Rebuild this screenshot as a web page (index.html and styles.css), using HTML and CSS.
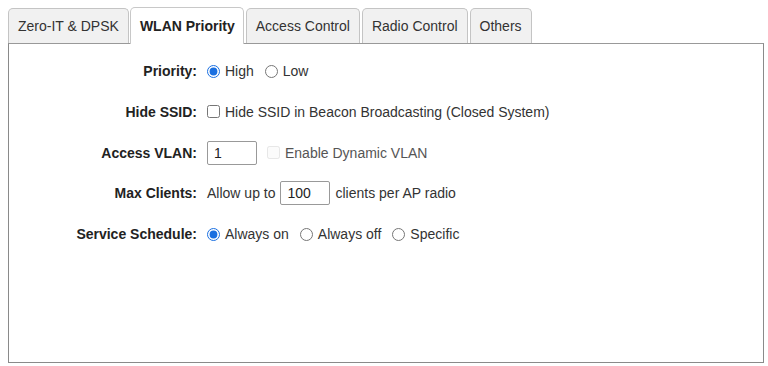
FILE: index.html
```html
<!DOCTYPE html>
<html lang="en">

<head>
    <meta charset="UTF-8">
    <title>WLAN Settings</title>
    <link rel="stylesheet" href="styles.css">
</head>

<body>

    <div class="tabs">
        <div class="tab">Zero-IT &amp; DPSK</div>
        <div class="tab active">WLAN Priority</div>
        <div class="tab">Access Control</div>
        <div class="tab">Radio Control</div>
        <div class="tab">Others</div>
    </div>

    <div class="panel">
        <div class="form">
            <div class="label">Priority:</div>
            <div class="field">
                <label class="opt"><input type="radio" name="prio" checked> High</label>
                <label class="opt"><input type="radio" name="prio"> Low</label>
            </div>

            <div class="label">Hide SSID:</div>
            <div class="field">
                <label class="opt"><input type="checkbox"> Hide SSID in Beacon Broadcasting (Closed System)</label>
            </div>

            <div class="label">Access VLAN:</div>
            <div class="field">
                <input type="text" class="num" value="1">
                <label class="opt disabled"><input type="checkbox" disabled> Enable Dynamic VLAN</label>
            </div>

            <div class="label">Max Clients:</div>
            <div class="field">
                <span>Allow up to</span>
                <input type="text" class="num" value="100">
                <span>clients per AP radio</span>
            </div>

            <div class="label">Service Schedule:</div>
            <div class="field">
                <label class="opt"><input type="radio" name="sched" checked> Always on</label>
                <label class="opt"><input type="radio" name="sched"> Always off</label>
                <label class="opt"><input type="radio" name="sched"> Specific</label>
            </div>
        </div>
    </div>

</body>

</html>
```

FILE: styles.css
```css
body {
    margin: 0;
    padding: 6px 4px 0 8px;
    font-family: "Liberation Sans", Arial, sans-serif;
    font-size: 14px;
    color: #333;
    background: #fff;
}

.tabs {
    display: flex;
    align-items: flex-end;
    gap: 2px;
    height: 37px;
}

.tab {
    height: 34px;
    line-height: 34px;
    padding: 0 9px;
    background-color: #f1f1f1;
    border: 1px solid #c4c4c4;
    border-bottom: none;
    border-radius: 5px 5px 0 0;
    color: #333;
}

.tab.active {
    height: 36px;
    line-height: 36px;
    padding: 0 8px 0 9px;
    background-color: #fff;
    border-color: #c8c8c8;
    font-weight: bold;
    color: #222;
    margin-bottom: -1px;
    margin-left: -1px;
    position: relative;
    z-index: 1;
}

.panel {
    height: 318px;
    border: 1px solid #8a8a8a;
    border-top-color: #999;
    background: #fff;
}

.form {
    display: grid;
    grid-template-columns: 188px 1fr;
    column-gap: 10px;
    row-gap: 16.75px;
    padding-top: 15px;
}

.label {
    text-align: right;
    font-weight: bold;
    color: #222;
    height: 24px;
    line-height: 24px;
}

.field {
    display: flex;
    align-items: center;
    gap: 5px;
    height: 24px;
}

.opt {
    display: flex;
    align-items: center;
    gap: 5px;
    margin-right: 6px;
}

.opt input {
    margin: 0;
    width: 13px;
    height: 13px;
    accent-color: #1a6fe0;
}

.opt.disabled {
    color: #555;
}

.opt.disabled input {
    opacity: 0.5;
}

.num {
    width: 50px;
    height: 24px;
    box-sizing: border-box;
    padding: 0 6px;
    border: 1px solid #999;
    border-radius: 2px;
    font-family: inherit;
    font-size: 14px;
    color: #222;
}

.field .num + .opt {
    margin-left: 5px;
}
```
